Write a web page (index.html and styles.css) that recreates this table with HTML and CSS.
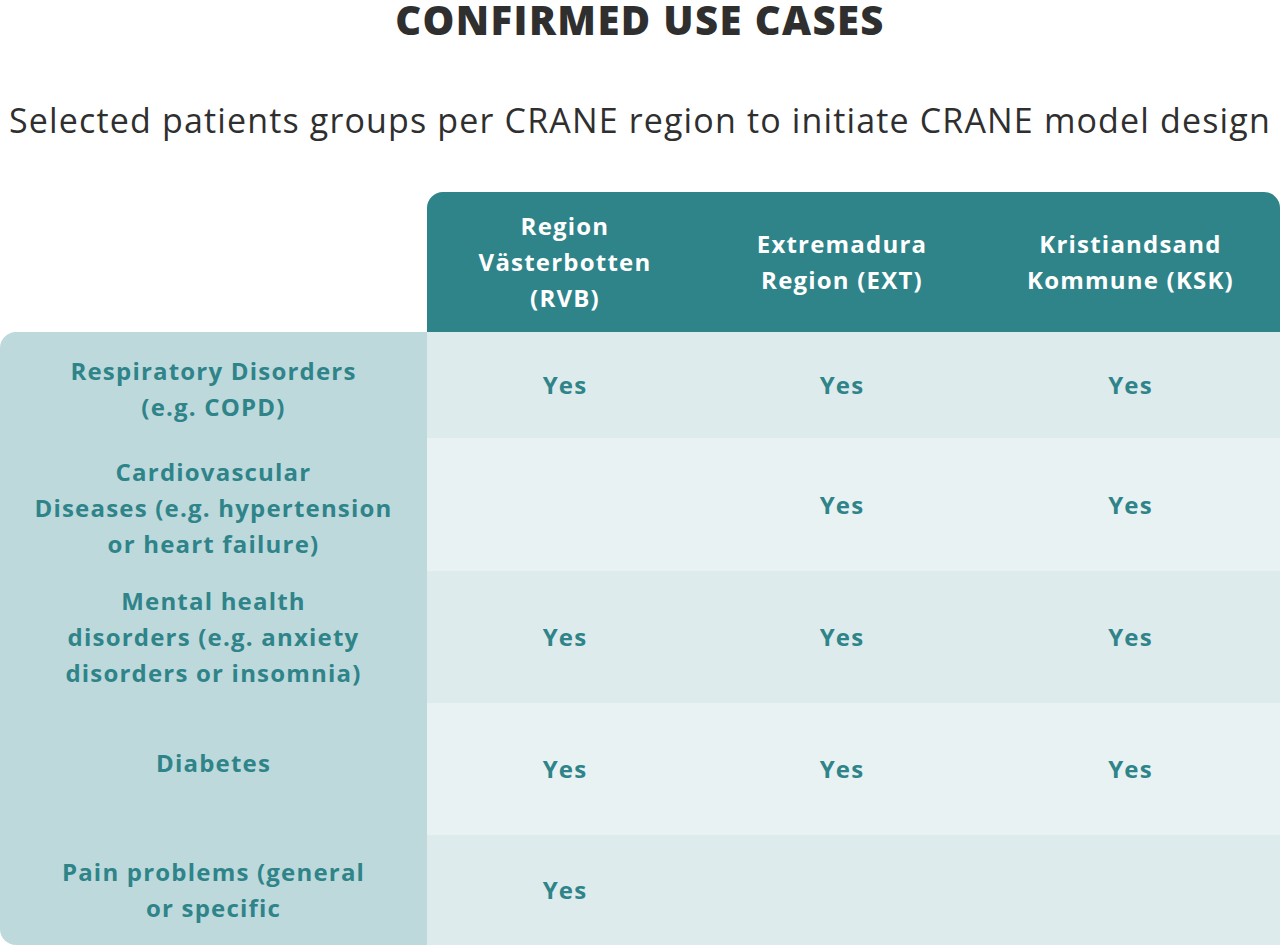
FILE: index.html
```html
<!DOCTYPE html>
<html>
<head>
<meta charset="utf-8">
<link rel="stylesheet" href="styles.css">
</head>
<body>
<h1 class="title">CONFIRMED USE CASES</h1>
<p class="subtitle">Selected patients groups per CRANE region to initiate CRANE model design</p>
<div class="table">
  <div class="corner"></div>
  <div class="head head-first">Region<br>Västerbotten<br>(RVB)</div>
  <div class="head">Extremadura<br>Region (EXT)</div>
  <div class="head head-last">Kristiandsand<br>Kommune (KSK)</div>

  <div class="label label-first label-down">Respiratory Disorders<br>(e.g. COPD)</div>
  <div class="cell odd">Yes</div>
  <div class="cell odd">Yes</div>
  <div class="cell odd">Yes</div>

  <div class="label label-down">Cardiovascular<br>Diseases (e.g. hypertension<br>or heart failure)</div>
  <div class="cell even"></div>
  <div class="cell even">Yes</div>
  <div class="cell even">Yes</div>

  <div class="label">Mental health<br>disorders (e.g. anxiety<br>disorders or insomnia)</div>
  <div class="cell odd">Yes</div>
  <div class="cell odd">Yes</div>
  <div class="cell odd">Yes</div>

  <div class="label label-up">Diabetes</div>
  <div class="cell even">Yes</div>
  <div class="cell even">Yes</div>
  <div class="cell even">Yes</div>

  <div class="label label-last">Pain problems (general<br>or specific</div>
  <div class="cell odd">Yes</div>
  <div class="cell odd"></div>
  <div class="cell odd"></div>
</div>
</body>
</html>
```

FILE: styles.css
```css
html, body {
  margin: 0;
  padding: 0;
  background: #ffffff;
}
body {
  font-family: "Open Sans", "DejaVu Sans", sans-serif;
  width: 1280px;
  height: 945px;
  overflow: hidden;
}
.title {
  margin: 0;
  padding-top: 0;
  text-align: center;
  font-size: 40px;
  line-height: 40px;
  font-weight: 800;
  color: #2f2f2f;
  letter-spacing: 1.4px;
}
.subtitle {
  margin: 58px 0 0 0;
  text-align: center;
  font-size: 34px;
  line-height: 44px;
  font-weight: 400;
  color: #2f2f2f;
  letter-spacing: 1.15px;
  white-space: nowrap;
}
.table {
  margin-top: 50px;
  display: grid;
  grid-template-columns: 427px 276px 278px 299px;
  grid-template-rows: 140px 106px 133px 132px 132px 110px;
  font-weight: 700;
  font-size: 24px;
  line-height: 36px;
  text-align: center;
  letter-spacing: 1.2px;
}
.head {
  background: #2e8489;
  color: #ffffff;
  display: flex;
  align-items: center;
  justify-content: center;
}
.head-first { border-top-left-radius: 16px; }
.head-last { border-top-right-radius: 16px; }
.label {
  background: #bed9dc;
  color: #2e8489;
  display: flex;
  align-items: center;
  justify-content: center;
  white-space: nowrap;
}
.label-down { padding-top: 7px; }
.label-up { padding-bottom: 12px; }
.label-first { border-top-left-radius: 16px; }
.label-last { border-bottom-left-radius: 16px; }
.cell {
  color: #2e8489;
  display: flex;
  align-items: center;
  justify-content: center;
}
.odd { background: #deebec; }
.even { background: #e8f2f3; }
```
